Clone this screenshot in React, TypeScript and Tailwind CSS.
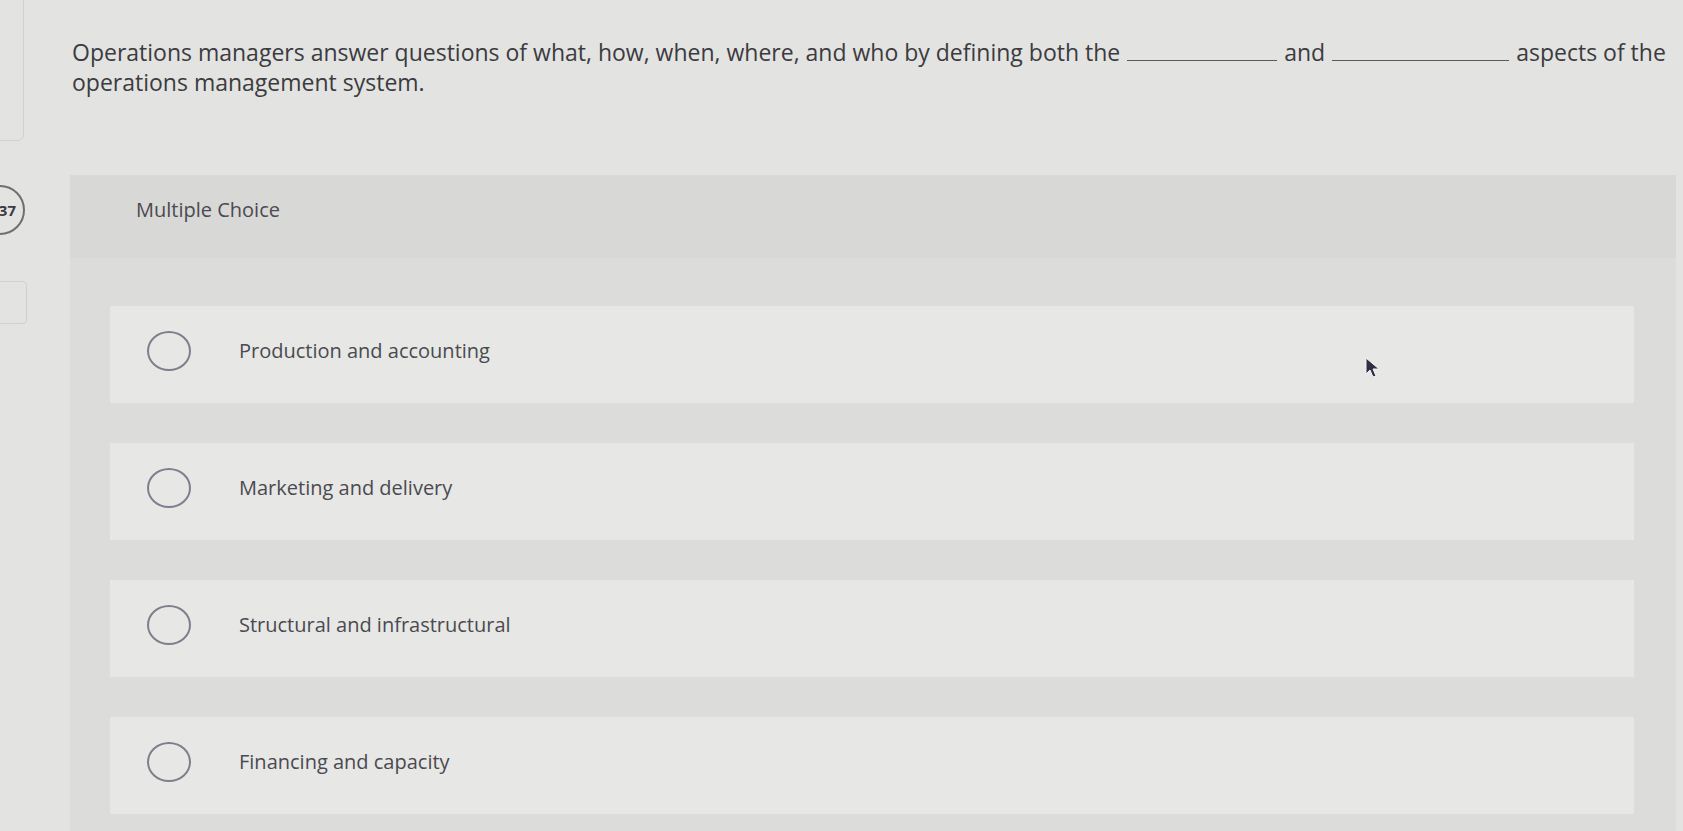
import React from "react";

const options = [
  "Production and accounting",
  "Marketing and delivery",
  "Structural and infrastructural",
  "Financing and capacity",
];

export default function App() {
  return (
    <div className="relative flex h-[831px] w-[1683px] overflow-hidden bg-[#e3e3e1] font-['Open_Sans',sans-serif]">
      {/* left rail */}
      <div className="flex w-[28px] shrink-0 flex-col overflow-hidden">
        <div className="-ml-[36px] -mt-[6px] h-[147px] w-[60px] shrink-0 rounded-[6px] border border-[#d0d0ce]" />
        <div className="-ml-[25px] mt-[44px] flex h-[50px] w-[50px] shrink-0 items-center justify-end rounded-full border-2 border-[#6e6e73] pr-[7px] text-[15px] font-bold text-[#3a3a3f]">
          37
        </div>
        <div className="-ml-[33px] mt-[46px] h-[43px] w-[60px] shrink-0 rounded-[4px] border border-[#d0d0ce]" />
      </div>

      {/* main */}
      <div className="flex min-w-0 flex-1 flex-col">
        <div className="ml-[44px] pt-[37px] text-[23px] leading-[30px] text-[#3b3b40]">
          <span className="whitespace-nowrap">
            Operations managers answer questions of what, how, when, where, and who by defining both the
            <span className="mx-[7px] inline-block h-[18px] w-[150px] border-b border-[#5a5a60]" />
            and
            <span className="mx-[7px] inline-block h-[18px] w-[177px] border-b border-[#5a5a60]" />
            aspects of the
          </span>
          <br />
          operations management system.
        </div>

        <div className="ml-[42px] mt-[78px] flex w-[1606px] flex-1 flex-col bg-[#dcdcda]">
          <div className="h-[83px] shrink-0 bg-[#d8d8d6] pl-[66px] pt-[23px] text-[20px] leading-[24px] text-[#4a4a50]">
            Multiple Choice
          </div>
          <div className="flex flex-col gap-[40px] pl-[40px] pr-[42px] pt-[48px]">
            {options.map((o) => (
              <div key={o} className="flex h-[97px] shrink-0 items-center bg-[#e7e7e5] pb-[8px]">
                <div className="ml-[37px] h-[40px] w-[44px] shrink-0 rounded-[50%] border-2 border-[#7d808c]" />
                <div className="ml-[48px] text-[20px] leading-[24px] text-[#4a4a50]">{o}</div>
              </div>
            ))}
          </div>
        </div>
      </div>

      {/* mouse cursor */}
      <svg
        className="absolute left-[1365px] top-[357px]"
        width="16"
        height="22"
        viewBox="0 0 16 22"
      >
        <path d="M1 1 L1 17 L5 13 L8 20 L11 19 L8 12 L14 12 Z" fill="#2e2f42" stroke="#f4f4f4" strokeWidth="1" />
      </svg>
    </div>
  );
}
